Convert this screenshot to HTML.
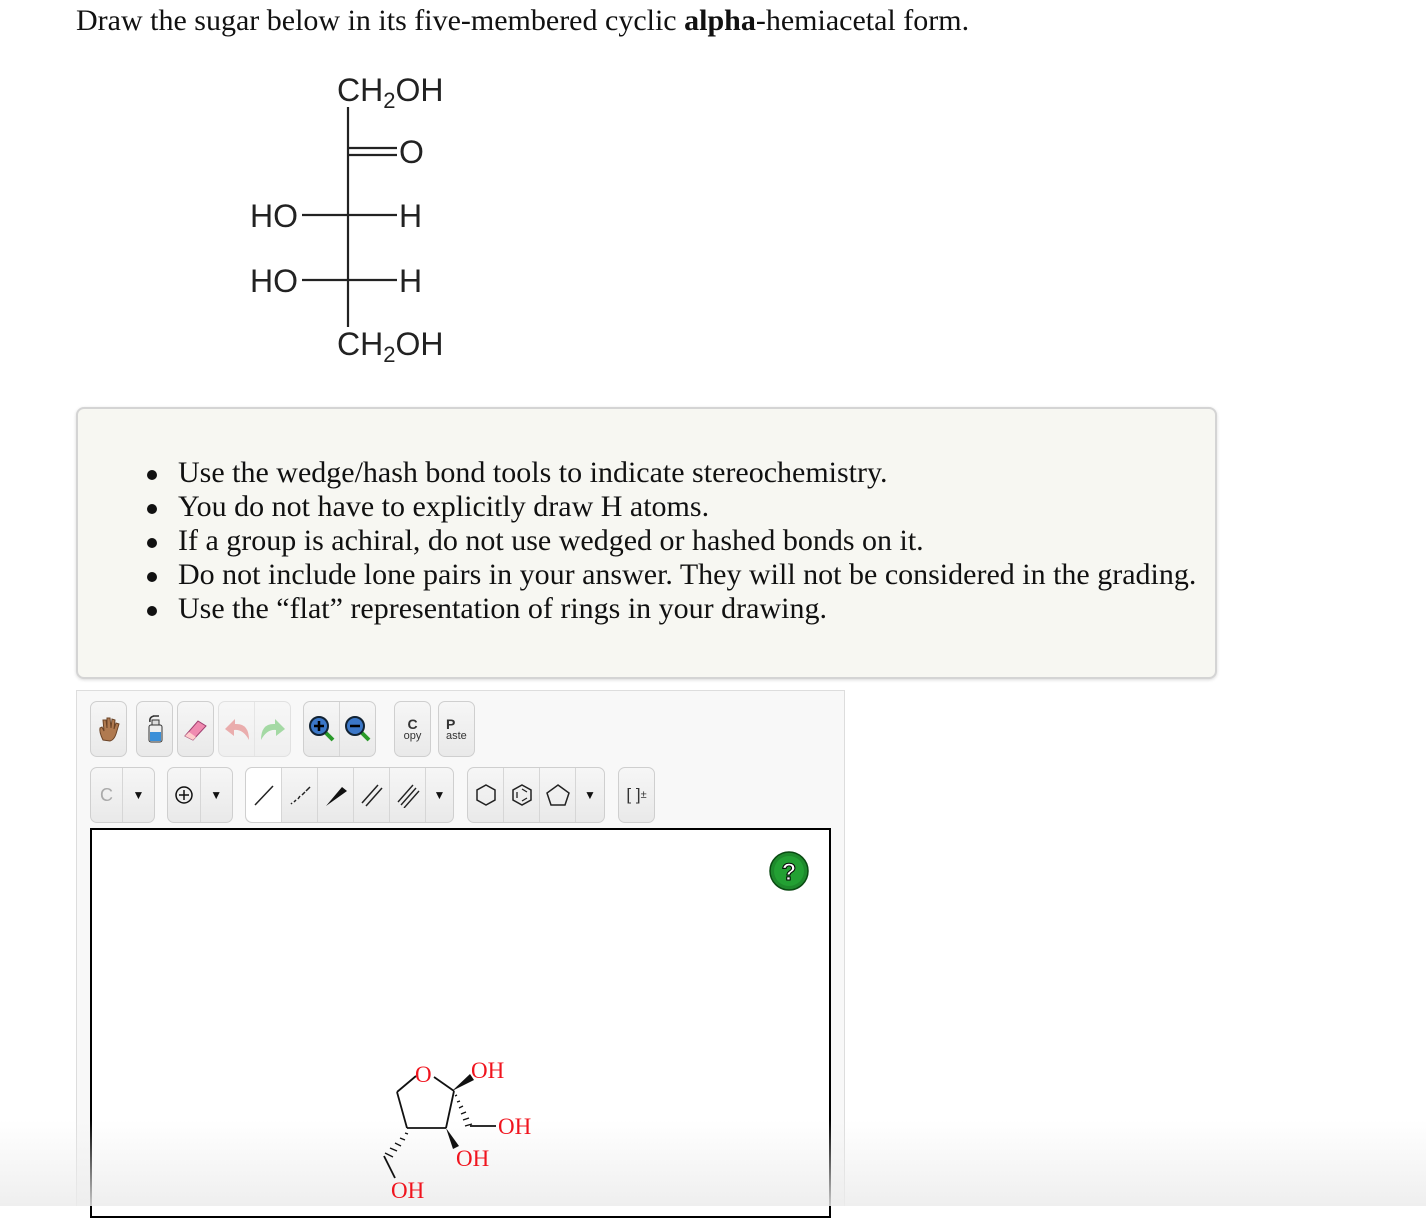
<!DOCTYPE html>
<html><head><meta charset="utf-8">
<style>
*{margin:0;padding:0;box-sizing:border-box}
body{width:1426px;height:1206px;position:relative;overflow:hidden;background:#fff;font-family:"Liberation Serif",serif;color:#111}
.abs{position:absolute}
.q{left:76px;top:4px;font-size:30px;white-space:nowrap}
.box{left:76px;top:407px;width:1141px;height:272px;background:#f7f7f2;border:2px solid #d4d4d4;border-radius:8px;box-shadow:0 1px 3px rgba(0,0,0,.15)}
.box ul{position:absolute;left:100px;top:47px;font-size:30px;line-height:34px;list-style:none}
.box li{position:relative;white-space:nowrap}
.box li:before{content:"";position:absolute;left:-31px;top:14px;width:10px;height:10px;border-radius:50%;background:#111}
.ed{left:76px;top:690px;width:769px;height:516px;background:#f8f8f8;border:1px solid #ddd;border-bottom:none}
.btn{position:absolute;height:56px;background:linear-gradient(#f6f6f6,#e9e9e9);border:1px solid #cfcfcf;border-radius:7px;display:flex}
.btn>div{flex:1;border-right:1px solid #d6d6d6;display:flex;align-items:center;justify-content:center;font-family:"Liberation Sans",sans-serif}
.btn>div:last-child{border-right:none}
.canvas{left:90px;top:828px;width:741px;height:390px;background:#fff;border:2px solid #000}
.fade{left:0;top:1120px;width:1426px;height:86px;background:linear-gradient(rgba(255,255,255,0),rgba(236,236,236,.85));pointer-events:none}
</style></head><body>
<div class="abs q">Draw the sugar below in its five-membered cyclic <b>alpha</b>-hemiacetal form.</div>

<svg class="abs" style="left:0;top:0" width="500" height="380">
<g stroke="#222" stroke-width="2.2" fill="none">
<line x1="348" y1="107" x2="348" y2="327"/>
<line x1="349" y1="148" x2="397" y2="148"/>
<line x1="349" y1="155" x2="397" y2="155"/>
<line x1="302" y1="215" x2="397" y2="215"/>
<line x1="302" y1="280" x2="397" y2="280"/>
</g>
<g font-family="Liberation Sans,sans-serif" font-size="32" fill="#222">
<text x="337" y="101">CH<tspan font-size="22" dy="7">2</tspan><tspan dy="-7">OH</tspan></text>
<text x="399" y="163">O</text>
<text x="250" y="227">HO</text><text x="399" y="227">H</text>
<text x="250" y="292">HO</text><text x="399" y="292">H</text>
<text x="337" y="355">CH<tspan font-size="22" dy="7">2</tspan><tspan dy="-7">OH</tspan></text>
</g>
</svg>

<div class="abs box"><ul>
<li>Use the wedge/hash bond tools to indicate stereochemistry.</li>
<li>You do not have to explicitly draw H atoms.</li>
<li>If a group is achiral, do not use wedged or hashed bonds on it.</li>
<li>Do not include lone pairs in your answer. They will not be considered in the grading.</li>
<li>Use the “flat” representation of rings in your drawing.</li>
</ul></div>

<div class="abs ed"></div>
<!-- row 1 -->
<div class="btn" style="left:90px;top:701px;width:37px"><div><svg width="24" height="26"><path d="M6 24 Q2 16 3 12 L5 11 L7 15 L6 4 L9 4 L10 12 L10 2 L13 2 L14 12 L15 3 L18 4 L17 13 L19 7 L22 8 L19 18 Q17 24 13 25 Z" fill="#b07a50" stroke="#6b4326"/></svg></div></div>
<div class="btn" style="left:136px;top:701px;width:37px"><div><svg width="20" height="30"><path d="M8 2 L14 2 M9 2 Q4 3 5 8" stroke="#333" fill="none" stroke-width="1.5"/><rect x="7" y="6" width="7" height="5" fill="#ddd" stroke="#333"/><rect x="4" y="11" width="13" height="17" rx="2" fill="#eee" stroke="#333"/><rect x="5" y="18" width="11" height="9" fill="#3a8fd8"/></svg></div></div>
<div class="btn" style="left:177px;top:701px;width:37px"><div><svg width="28" height="26"><path d="M3 20 L16 5 L24 10 L11 24 Z" fill="#f08ab0" stroke="#a04070"/><path d="M3 20 L7 16 L14 21 L11 24Z" fill="#fcc"/></svg></div></div>
<div class="btn" style="left:218px;top:701px;width:73px;opacity:.55"><div><svg width="28" height="26"><path d="M26 24 Q26 7 12 8 L12 3 L2 13 L11 20 L11 14 Q20 13 26 24Z" fill="#e07070"/></svg></div><div><svg width="28" height="26"><path d="M2 24 Q2 7 16 8 L16 3 L26 13 L17 20 L17 14 Q8 13 2 24Z" fill="#60c060"/></svg></div></div>
<div class="btn" style="left:303px;top:701px;width:73px"><div><svg width="28" height="28"><line x1="16" y1="16" x2="25" y2="25" stroke="#2a9a2a" stroke-width="4"/><circle cx="11" cy="11" r="9" fill="#3b77c8" stroke="#123" stroke-width="2"/><path d="M6 11h10M11 6v10" stroke="#000" stroke-width="2.5"/></svg></div><div><svg width="28" height="28"><line x1="16" y1="16" x2="25" y2="25" stroke="#2a9a2a" stroke-width="4"/><circle cx="11" cy="11" r="9" fill="#3b77c8" stroke="#123" stroke-width="2"/><path d="M6 11h10" stroke="#000" stroke-width="2.5"/></svg></div></div>
<div class="btn" style="left:394px;top:701px;width:37px"><div style="flex-direction:column;font-size:11px;line-height:10px;color:#333"><span style="font-size:14px;font-weight:bold;line-height:13px">C</span>opy</div></div>
<div class="btn" style="left:438px;top:701px;width:37px"><div style="flex-direction:column;font-size:11px;line-height:10px;color:#333;align-items:flex-start;padding-left:7px"><span style="font-size:14px;font-weight:bold;line-height:13px">P</span>aste</div></div>
<!-- row 2 -->
<div class="btn" style="left:90px;top:767px;width:65px"><div style="color:#aaa;font-size:18px">C</div><div style="font-size:12px">▼</div></div>
<div class="btn" style="left:167px;top:767px;width:66px"><div><svg width="20" height="20"><circle cx="10" cy="10" r="8" fill="none" stroke="#111" stroke-width="1.5"/><path d="M5 10h10M10 5v10" stroke="#111" stroke-width="1.5"/></svg></div><div style="font-size:12px">▼</div></div>
<div class="btn" style="left:245px;top:767px;width:209px">
<div style="background:#fff;border-radius:7px 0 0 7px"><svg width="26" height="26"><line x1="4" y1="23" x2="22" y2="4" stroke="#222" stroke-width="1.5"/></svg></div>
<div><svg width="26" height="26"><g stroke="#222" stroke-width="1.5"><line x1="4" y1="22" x2="5" y2="21"/><line x1="7" y1="20" x2="9" y2="18"/><line x1="11" y1="17" x2="13" y2="14"/><line x1="15" y1="13" x2="18" y2="10"/><line x1="19" y1="9" x2="23" y2="5"/></g></svg></div>
<div><svg width="26" height="26"><path d="M3 24 L19 5 L24 9 Z" fill="#111"/></svg></div>
<div><svg width="26" height="26"><g stroke="#222" stroke-width="1.5"><line x1="3" y1="21" x2="19" y2="3"/><line x1="7" y1="24" x2="23" y2="6"/></g></svg></div>
<div><svg width="26" height="26"><g stroke="#222" stroke-width="1.4"><line x1="3" y1="20" x2="18" y2="3"/><line x1="6" y1="23" x2="21" y2="6"/><line x1="9" y1="26" x2="24" y2="9"/></g></svg></div>
<div style="flex:0 0 27px;font-size:12px">▼</div></div>
<div class="btn" style="left:467px;top:767px;width:138px">
<div><svg width="24" height="24"><path d="M12 2 L21 7 L21 17 L12 22 L3 17 L3 7Z" fill="none" stroke="#222" stroke-width="1.5"/></svg></div>
<div><svg width="24" height="24"><path d="M12 2 L21 7 L21 17 L12 22 L3 17 L3 7Z" fill="none" stroke="#222" stroke-width="1.5"/><path d="M12 6 L17 9 M17 15 L12 18 M7 15 L7 9" stroke="#222" stroke-width="1.3"/></svg></div>
<div><svg width="26" height="24"><path d="M13 2 L24 10 L20 22 L6 22 L2 10Z" fill="none" stroke="#222" stroke-width="1.5"/></svg></div>
<div style="flex:0 0 28px;font-size:12px">▼</div></div>
<div class="btn" style="left:618px;top:767px;width:37px"><div style="font-size:17px;color:#333">[ ]<sup style="font-size:11px">±</sup></div></div>

<div class="abs canvas"></div>
<svg class="abs" style="left:768px;top:850px" width="42" height="42"><circle cx="21" cy="21" r="19" fill="#1e8a2c" stroke="#0a4a12" stroke-width="1.5"/><circle cx="21" cy="21" r="15" fill="#23a033"/><text x="21" y="30" text-anchor="middle" font-family="Liberation Sans,sans-serif" font-size="24" font-weight="bold" fill="#fff" stroke="#000" stroke-width="1">?</text></svg>

<div class="abs fade"></div>
<svg class="abs" style="left:360px;top:1040px" width="200" height="166">
<g stroke="#111" stroke-width="1.8" fill="none">
<line x1="56" y1="36" x2="37" y2="52"/>
<line x1="37" y1="52" x2="47" y2="88"/>
<line x1="47" y1="88" x2="86" y2="88"/>
<line x1="86" y1="88" x2="94" y2="51"/>
<line x1="94" y1="51" x2="74" y2="37"/>
<line x1="110" y1="86" x2="136" y2="86"/>
<line x1="24" y1="116" x2="35" y2="138"/>
</g>
<path d="M92 51 L110 34 L114 40 Z" fill="#111"/>
<path d="M86 88 L99 106 L93 109 Z" fill="#111"/>
<g stroke="#111" stroke-width="1.3">
<line x1="95" y1="56" x2="97" y2="55"/><line x1="97" y1="62" x2="100" y2="61"/><line x1="99" y1="68" x2="103" y2="66"/><line x1="101" y1="74" x2="106" y2="72"/><line x1="103" y1="80" x2="109" y2="78"/><line x1="105" y1="86" x2="112" y2="84"/>
<line x1="45" y1="93" x2="48" y2="94"/><line x1="40" y1="98" x2="45" y2="100"/><line x1="35" y1="103" x2="41" y2="106"/><line x1="30" y1="108" x2="37" y2="111"/><line x1="25" y1="113" x2="33" y2="117"/>
</g>
<g font-family="Liberation Serif,serif" font-size="23" fill="#f0141e">
<text x="55" y="42">O</text>
<text x="111" y="38">OH</text>
<text x="138" y="94">OH</text>
<text x="96" y="126">OH</text>
<text x="31" y="158">OH</text>
</g>
</svg>
</body></html>
